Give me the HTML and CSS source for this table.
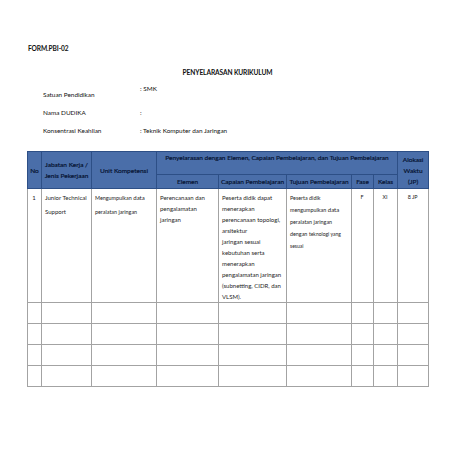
FILE: index.html
```html
<!DOCTYPE html>
<html>
<head>
<meta charset="utf-8">
<link rel="stylesheet" href="styles.css">
</head>
<body>
<div class="page">
  <div class="form-code">FORM.PBI-02</div>
  <div class="title">PENYELARASAN KURIKULUM</div>
  <div class="meta">
    <div class="meta-row first"><span class="label">Satuan Pendidikan</span><span class="value raised">: SMK</span></div>
    <div class="meta-row"><span class="label">Nama DUDIKA</span><span class="value">:</span></div>
    <div class="meta-row"><span class="label">Konsentrasi Keahlian</span><span class="value">: Teknik Komputer dan Jaringan</span></div>
  </div>
  <table class="grid">
    <colgroup>
      <col class="c-no"><col class="c-jab"><col class="c-unit"><col class="c-el"><col class="c-cp"><col class="c-tp"><col class="c-fase"><col class="c-kelas"><col class="c-jp">
    </colgroup>
    <thead>
      <tr class="h1">
        <th rowspan="2">No</th>
        <th rowspan="2">Jabatan Kerja /<br>Jenis Pekerjaan</th>
        <th rowspan="2">Unit Kompetensi</th>
        <th colspan="5" class="span-top">Penyelarasan dengan Elemen, Capaian Pembelajaran, dan Tujuan Pembelajaran</th>
        <th rowspan="2" class="jp">Alokasi<br>Waktu<br>(JP)</th>
      </tr>
      <tr class="h2">
        <th>Elemen</th>
        <th>Capaian Pembelajaran</th>
        <th>Tujuan Pembelajaran</th>
        <th>Fase</th>
        <th>Kelas</th>
      </tr>
    </thead>
    <tbody>
      <tr class="data">
        <td class="center">1</td>
        <td class="loose">Junior Technical<br>Support</td>
        <td class="loose"><span class="sm">Mengumpulkan</span> data<br><span class="sm">peralatan jaringan</span></td>
        <td>Perencanaan dan<br>pengalamatan<br>jaringan</td>
        <td>Peserta didik dapat<br>menerapkan<br>perencanaan topologi,<br>arsitektur<br>jaringan sesuai<br>kebutuhan serta<br>menerapkan<br>pengalamatan jaringan<br>(subnetting, CIDR, dan<br>VLSM).</td>
        <td class="tp"><span class="sm">Peserta didik</span><br><span class="sm">mengumpulkan</span> data<br><span class="sm">peralatan jaringan</span><br><span class="sm">dengan</span> <span class="xs">teknologi yang</span><br><span class="xs">sesuai</span></td>
        <td class="center sm">F</td>
        <td class="center sm">XI</td>
        <td class="center sm">8 JP</td>
      </tr>
      <tr class="empty"><td></td><td></td><td></td><td></td><td></td><td></td><td></td><td></td><td></td></tr>
      <tr class="empty"><td></td><td></td><td></td><td></td><td></td><td></td><td></td><td></td><td></td></tr>
      <tr class="empty"><td></td><td></td><td></td><td></td><td></td><td></td><td></td><td></td><td></td></tr>
      <tr class="empty"><td></td><td></td><td></td><td></td><td></td><td></td><td></td><td></td><td></td></tr>
    </tbody>
  </table>
</div>
</body>
</html>
```

FILE: styles.css
```css
* { box-sizing: border-box; }
html, body { margin: 0; padding: 0; background: #ffffff; }
body {
  font-family: Lato, "Open Sans", sans-serif;
  color: #111111;
  width: 453px;
  height: 453px;
  overflow: hidden;
}
.page {
  padding: 44px 25px 0 27px;
}
.form-code {
  font-weight: 700;
  font-size: 6.6px;
  line-height: 9px;
  padding-left: 1px;
  letter-spacing: -0.1px;
}
.title {
  font-weight: 700;
  font-size: 6.6px;
  line-height: 9px;
  text-align: center;
  margin-top: 15px;
  letter-spacing: -0.1px;
}
.meta {
  padding-left: 16px;
  margin-top: 7px;
}
.meta-row {
  display: flex;
  font-size: 6.4px;
  line-height: 9px;
  height: 18px;
  align-items: flex-start;
}
.meta-row.first .label { padding-top: 6px; }
.meta-row.first { height: 24px; }
.meta-row:last-child { height: 14px; }
.label {
  width: 97px;
  flex: none;
}
.grid {
  margin-top: 11px;
  border-collapse: collapse;
  table-layout: fixed;
  width: 401px;
  font-size: 6px;
  line-height: 11px;
}
.c-no { width: 14px; }
.c-jab { width: 50px; }
.c-unit { width: 65px; }
.c-el { width: 62px; }
.c-cp { width: 68px; }
.c-tp { width: 65px; }
.c-fase { width: 22px; }
.c-kelas { width: 24px; }
.c-jp { width: 31px; }
.grid th {
  background: #4a6ea9;
  color: #061331;
  font-weight: 500;
  font-size: 6.5px;
  line-height: 11px;
  border: 1px solid #2d4f86;
  text-align: center;
  vertical-align: middle;
  padding: 0 1px;
  -webkit-text-stroke: 0.15px #061331;
}
.grid .h1 { height: 23px; }
.grid .h2 { height: 14px; }
.grid th.span-top { vertical-align: top; padding-top: 0; }
.grid td {
  border: 1px solid #a3a3a3;
  vertical-align: top;
  padding: 3px 2px 0 3px;
  color: #1e1e1e;
}
.grid tr.data { height: 113px; }
.grid tr.empty { height: 21px; }
.grid td.center { text-align: center; padding-left: 1px; }
.grid td.loose { line-height: 14px; padding-top: 2px; }
.grid td.tp { line-height: 12px; }
.sm { font-size: 5.4px; }
.xs { font-size: 5px; }
```
